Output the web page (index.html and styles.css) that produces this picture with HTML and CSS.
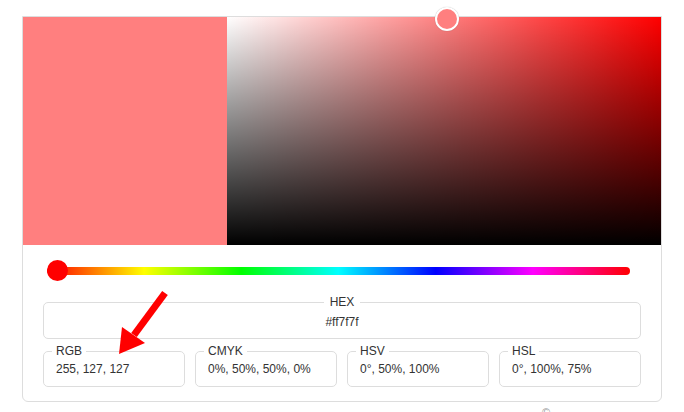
FILE: index.html
```html
<!DOCTYPE html>
<html lang="en">
<head>
    <meta charset="UTF-8">
    <meta name="viewport" content="width=device-width, initial-scale=1.0">
    <title>Color Picker</title>
    <link rel="stylesheet" href="styles.css">
</head>
<body>
    <div class="picker">
        <div class="picker-top">
            <div class="swatch"></div>
            <div class="saturation">
                <span class="sat-cursor"></span>
            </div>
        </div>
        <div class="picker-body">
            <div class="hue">
                <div class="hue-track"></div>
                <span class="hue-thumb"></span>
            </div>
            <fieldset class="field field-hex">
                <legend>HEX</legend>
                <div class="value">#ff7f7f</div>
            </fieldset>
            <div class="formats">
                <fieldset class="field">
                    <legend>RGB</legend>
                    <div class="value">255, 127, 127</div>
                </fieldset>
                <fieldset class="field">
                    <legend>CMYK</legend>
                    <div class="value">0%, 50%, 50%, 0%</div>
                </fieldset>
                <fieldset class="field">
                    <legend>HSV</legend>
                    <div class="value">0°, 50%, 100%</div>
                </fieldset>
                <fieldset class="field">
                    <legend>HSL</legend>
                    <div class="value">0°, 100%, 75%</div>
                </fieldset>
            </div>
        </div>
        <!-- annotation arrow pointing at the RGB value -->
        <svg class="arrow" width="60" height="80" viewBox="0 0 60 80">
            <line x1="47" y1="5" x2="16" y2="47" stroke="#ff0000" stroke-width="7"/>
            <polygon points="1,66 4,39 27,55" fill="#ff0000"/>
        </svg>
    </div>
    <div class="footer">©</div>
</body>
</html>
```

FILE: styles.css
```css
body {
    margin: 0;
    padding: 16px 22px 0;
    font-family: 'Liberation Sans', Arial, sans-serif;
    font-size: 12px;
    color: #333;
    background: #fff;
}
.picker {
    position: relative;
    width: 638px;
    border: 1px solid #ddd;
    border-radius: 0 0 6px 6px;
    background: #fff;
}
.picker-top {
    display: flex;
    height: 228px;
}
.swatch {
    width: 204px;
    background: #ff7f7f;
}
.saturation {
    position: relative;
    flex: 1;
    background:
        linear-gradient(to bottom, rgba(0,0,0,0), #000),
        linear-gradient(to right, #fff, rgba(255,255,255,0)),
        #ff0000;
}
.sat-cursor {
    position: absolute;
    left: 208px;
    top: -10px;
    width: 20px;
    height: 20px;
    border: 2px solid #fff;
    border-radius: 50%;
    background: #ff7f7f;
    box-shadow: 0 0 1px rgba(0,0,0,0.3);
}
.picker-body {
    padding: 15px 20px 14px;
}
.hue {
    position: relative;
    height: 21px;
    margin: 0 11px 14px 4px;
    display: flex;
    align-items: center;
}
.hue-track {
    flex: 1;
    height: 8px;
    border-radius: 4px;
    background: linear-gradient(to right, #f00, #ff0, #0f0, #0ff, #00f, #f0f, #f00);
}
.hue-thumb {
    position: absolute;
    left: 0;
    top: 0;
    width: 21px;
    height: 21px;
    border-radius: 50%;
    background: #ff0000;
}
.field {
    margin: 0;
    padding: 0 12px 10px;
    border: 1px solid #ddd;
    border-radius: 5px;
    min-width: 0;
}
.field legend {
    padding: 0 4px;
    margin-left: -4px;
    line-height: 14px;
}
.field .value {
    padding-top: 4px;
    line-height: 14px;
    white-space: nowrap;
}
.field-hex {
    text-align: center;
    padding-bottom: 9px;
}
.field-hex legend {
    margin: 0 auto;
    padding: 0 6px;
}
.field-hex .value {
    padding-top: 6px;
}
.formats {
    display: grid;
    grid-template-columns: repeat(4, 1fr);
    gap: 10px;
    margin-top: 5px;
}
.arrow {
    position: absolute;
    left: 95px;
    top: 271px;
}
.footer {
    display: flex;
    justify-content: flex-end;
    width: 640px;
    padding-right: 112px;
    box-sizing: border-box;
    margin-top: 4px;
    color: #999;
    font-size: 11px;
}
```
